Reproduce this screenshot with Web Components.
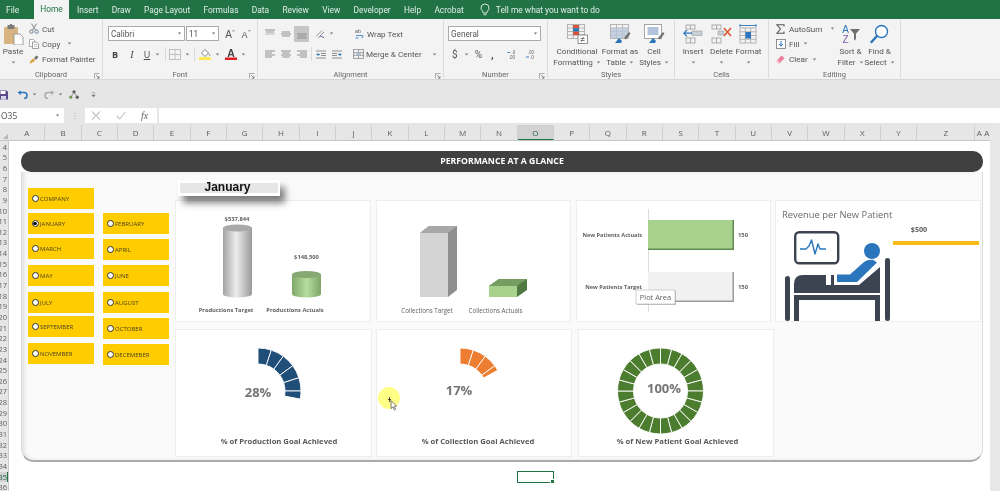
<!DOCTYPE html>
<html>
<head>
<meta charset="utf-8">
<title>Performance at a glance</title>
<style>
  html, body { margin: 0; height: 491px; overflow: hidden; background: #fff; }
  body { font-family: "Open Sans", "Liberation Sans", sans-serif; font-size: 9px; color: #555; }
  excel-window { width: 1000px; height: 491px; }
</style>
</head>
<body>
<excel-window>
  <ribbon-tabs></ribbon-tabs>
  <ribbon-bar></ribbon-bar>
  <quick-access></quick-access>
  <formula-bar></formula-bar>
  <sheet-view>
    <perf-dashboard heading="PERFORMANCE AT A GLANCE">
      <tile-panel slot="tiles"></tile-panel>
      <month-title slot="month">January</month-title>
      <card-row slot="top">
        <dash-card style="width:194px"><production-chart></production-chart></dash-card>
        <dash-card style="width:193px;margin-left:7px"><collection-chart></collection-chart></dash-card>
        <dash-card style="width:193px;margin-left:7px"><patients-chart></patients-chart></dash-card>
        <dash-card style="width:204px;margin-left:6px"><revenue-chart></revenue-chart></dash-card>
      </card-row>
      <card-row slot="bottom">
        <dash-card style="width:195px"><goal-gauge pct="28" step="18" color="#1f4e79" cx="82" tx="82" ty="62" lx="103">% of Production Goal Achieved</goal-gauge></dash-card>
        <dash-card style="width:194px;margin-left:6px"><goal-gauge pct="17" step="18" color="#ed7d31" cx="83" tx="82" ty="60" lx="101">% of Collection Goal Achieved</goal-gauge></dash-card>
        <dash-card style="width:194px;margin-left:8px"><goal-gauge pct="100" step="15" color="#4c7c2e" cx="81.5" tx="85" ty="58" lx="98.5">% of New Patient Goal Achieved</goal-gauge></dash-card>
      </card-row>
    </perf-dashboard>
  </sheet-view>
</excel-window>

<script>
/* small helper: static element, markup and styles in an open shadow root */
function simple(name, css, html) {
  customElements.define(name, class extends HTMLElement {
    constructor() {
      super();
      this.attachShadow({mode: 'open'}).innerHTML = '<style>' + css + '</style>' + html;
    }
  });
}

const BLUE = '#2a75bb';
function lines(rows) {
  return rows.map(r => `<path d="M${r[0]} ${r[1]}H${r[2]}" stroke="${r[3] || '#8f8f8f'}" stroke-width="1"/>`).join('');
}
function grid(x, y, w, h, nx, ny, c) {
  let s = `<rect x="${x}" y="${y}" width="${w}" height="${h}" fill="none" stroke="${c}" stroke-width=".8"/>`;
  for (let i = 1; i < nx; i++) s += `<path d="M${x + w * i / nx} ${y}v${h}" stroke="${c}" stroke-width=".8"/>`;
  for (let i = 1; i < ny; i++) s += `<path d="M${x} ${y + h * i / ny}h${w}" stroke="${c}" stroke-width=".8"/>`;
  return s;
}

/* all icons are drawn for a viewBox equal to their size */
const ICONS = {
  caret: [5, 3, '<path d="M.8 .5h3.4L2.5 2.5z" fill="#777"/>'],
  launcher: [6, 6, '<path d="M.5 .5h5M.5 .5v5" stroke="#999" fill="none" stroke-width=".8"/><path d="M2 2l3 3M5 3v2.3H2.8" stroke="#777" fill="none" stroke-width=".8"/>'],
  paste: [21, 21, '<rect x="1" y="3" width="14" height="17" rx="1" fill="#d8b483"/><rect x="4.5" y="1" width="7" height="4" fill="#7b7b7b"/><path d="M7 0h2v2H7z" fill="#7b7b7b"/><path d="M11 10h6l3 3v8h-9z" fill="#fff" stroke="#8a8a8a" stroke-width=".8"/>'],
  cut: [10, 11, '<circle cx="2.4" cy="8.6" r="1.7" fill="none" stroke="#6a7f95"/><circle cx="7.6" cy="8.6" r="1.7" fill="none" stroke="#6a7f95"/><path d="M3.3 7.2L7.6.6M6.7 7.2L2.4.6" stroke="#7d7d7d" stroke-width=".9"/>'],
  copy: [10, 10, '<path d="M.5 .5h4l1 1v6h-5z" fill="#fff" stroke="#9a9a9a" stroke-width=".8"/><path d="M3.5 3h4l2 2v4.5h-6z" fill="#fff" stroke="#8a8a8a" stroke-width=".8"/><path d="M5 5.5h3M5 7.3h3" stroke="#aaa" stroke-width=".7"/>'],
  painter: [10, 9, '<path d="M.5 8.5c1-3 2-4 4-5l1.6 1.6c-1 2-2.5 3-5.6 3.4z" fill="#d9a441"/><path d="M5 2.8L7.8.5l1.6 1.6L6.8 5z" fill="#6e6e6e"/>'],
  borders: [12, 11, grid(.5, .5, 11, 10, 2, 2, '#b5b5b5')],
  fill: [12, 12, '<path d="M2.5 5L6 1.5 9.5 5 6 8.5z" fill="#fff" stroke="#777" stroke-width=".9"/><path d="M9.7 5.5c.8 1 1.2 1.7 1.2 2.3" stroke="#777" stroke-width=".9" fill="none"/><rect x="0" y="9.2" width="12" height="2.8" fill="#ffe94a"/>'],
  fontcolor: [12, 12, '<text x="6" y="8.5" text-anchor="middle" font-family="Liberation Sans,sans-serif" font-size="10.5" font-weight="700" fill="#444">A</text><rect x="0" y="9.5" width="12" height="2.5" fill="#e02020"/>'],
  growa: [11, 10, '<text x="4.5" y="9" text-anchor="middle" font-family="Liberation Sans,sans-serif" font-size="10" fill="#555">A</text><path d="M8.5 2.5l1-1.5 1 1.5" fill="none" stroke="#777" stroke-width=".7"/>'],
  shrinka: [11, 10, '<text x="4.5" y="9" text-anchor="middle" font-family="Liberation Sans,sans-serif" font-size="9" fill="#555">A</text><path d="M8.5 1l1 1.5 1-1.5" fill="none" stroke="#777" stroke-width=".7"/>'],
  atop: [10, 10, lines([[0, 1, 10], [1, 3, 9], [0, 5, 10, '#bdbdbd']])],
  amid: [10, 10, lines([[1, 3, 9], [0, 5, 10], [1, 7, 9]])],
  abot: [10, 10, lines([[0, 5, 10], [1, 7, 9], [0, 9, 10]])],
  orient: [11, 10, '<path d="M1 7.5L7 1.5M3 9l6-6" stroke="#8a8a8a" stroke-width=".9"/><path d="M5 7l4 1.5" stroke="#7b5ea7" stroke-width="1"/>'],
  wrap: [9, 11, '<text x="0" y="5" font-family="Liberation Sans,sans-serif" font-size="5.5" fill="#666">ab</text><path d="M1 7.5h6q1.5 0 1 1.5L6.5 10M.5 10h3" fill="none" stroke="#2a75bb" stroke-width=".8"/>'],
  left: [10, 8, lines([[0, 1, 10], [0, 3, 7], [0, 5, 10], [0, 7, 7]])],
  center: [10, 8, lines([[0, 1, 10], [1.5, 3, 8.5], [0, 5, 10], [1.5, 7, 8.5]])],
  right: [10, 8, lines([[0, 1, 10], [3, 3, 10], [0, 5, 10], [3, 7, 10]])],
  indl: [10, 9, lines([[0, 1, 10], [5, 3.5, 10], [5, 5.5, 10], [0, 8, 10]]) + '<path d="M4 4.5H1M2.5 3L1 4.5 2.5 6" fill="none" stroke="#2a75bb" stroke-width=".9"/>'],
  indr: [10, 9, lines([[0, 1, 10], [0, 3.5, 5], [0, 5.5, 5], [0, 8, 10]]) + '<path d="M6 4.5h3M7.5 3L9 4.5 7.5 6" fill="none" stroke="#2a75bb" stroke-width=".9"/>'],
  merge: [11, 10, grid(.5, .5, 10, 9, 2, 3, '#8f8f8f') + '<rect x="1" y="3.5" width="9" height="3" fill="#f3f3f3" stroke="#8f8f8f" stroke-width=".5"/><path d="M3 5h5" stroke="#2a75bb" stroke-width=".8"/>'],
  incdec: [10, 9, '<text x="6.5" y="4" text-anchor="middle" font-family="Liberation Sans,sans-serif" font-size="4.5" fill="#666">.0</text><text x="5" y="8.7" text-anchor="middle" font-family="Liberation Sans,sans-serif" font-size="4.5" fill="#666">.00</text><path d="M3 2.5H.5" stroke="#2a75bb" stroke-width=".9"/>'],
  decdec: [10, 9, '<text x="6" y="4" text-anchor="middle" font-family="Liberation Sans,sans-serif" font-size="4.5" fill="#666">.00</text><text x="7" y="8.7" text-anchor="middle" font-family="Liberation Sans,sans-serif" font-size="4.5" fill="#666">.0</text><path d="M1 7h3" stroke="#2a75bb" stroke-width=".9"/>'],
  cond: [21, 20, grid(.5, .5, 17, 14, 3, 4, '#a5a5a5') + '<rect x="6" y="1" width="6" height="3.2" fill="#d4533a"/><rect x="6" y="4.2" width="6" height="3.5" fill="#2a75bb"/><rect x="6" y="7.7" width="6" height="3.5" fill="#d4533a"/><rect x="11" y="11" width="9.5" height="8.5" fill="#fff" stroke="#777" stroke-width=".8"/><text x="15.7" y="18" text-anchor="middle" font-family="Liberation Sans,sans-serif" font-size="8" fill="#555">≠</text>'],
  table: [21, 20, grid(.5, .5, 18, 14, 3, 4, '#a8a8a8') + '<rect x="1" y="4" width="17" height="10" fill="#b9c8dc" opacity=".8"/><path d="M5 19l4-5 3 3-1 2z" fill="#2a75bb"/><path d="M14 14l5-6 1.5 1.5-4.5 6z" fill="#6e6e6e"/>'],
  cell: [21, 20, '<rect x=".5" y=".5" width="17" height="14" fill="#fff" stroke="#a5a5a5"/><rect x="3.5" y="3" width="11" height="8" fill="#b2c3db"/><path d="M5 19l4-5 3 3-1 2z" fill="#2a75bb"/><path d="M14 14l5-6 1.5 1.5-4.5 6z" fill="#6e6e6e"/>'],
  insert: [20, 20, grid(3, 1, 9, 4, 2, 1, '#999') + grid(3, 14, 9, 5, 2, 1, '#999') + '<rect x="9" y="7" width="10" height="4.5" fill="#c8d0da" stroke="#999" stroke-width=".6"/><path d="M9 9.2H1M4 6L.8 9.2 4 12.4" fill="none" stroke="#2a75bb" stroke-width="1.2"/>'],
  delete: [21, 20, grid(1, 1, 9, 4, 2, 1, '#999') + grid(1, 14, 9, 5, 2, 1, '#999') + '<rect x="7" y="7" width="6" height="4" fill="#c8d0da" stroke="#999" stroke-width=".6"/><path d="M13 4l7 8M20 4l-7 8" stroke="#d9542b" stroke-width="1.5"/>'],
  format: [19, 20, grid(1, 4, 16, 15, 3, 4, '#a5a5a5') + '<rect x="6.5" y="8" width="5.5" height="6.5" fill="#2a75bb"/><path d="M1 1.5h16M1 0v3M17 0v3" stroke="#2a75bb" stroke-width=".9"/>'],
  sigma: [9, 10, '<path d="M8 2.5V.8H1l3.5 4.2L1 9.2h7V7.5" fill="none" stroke="#555" stroke-width="1.1"/>'],
  filldown: [10, 10, '<rect x=".5" y=".5" width="9" height="9" fill="#fff" stroke="#777" stroke-width=".8"/><path d="M5 2v5M3 5l2 2.2L7 5" fill="none" stroke="#2a75bb" stroke-width="1"/>'],
  eraser: [9, 9, '<path d="M.5 6l5-5.5 3 2.5-5 5.5z" fill="#ec7d9c"/><path d="M.5 6l2.2 2.2 1.5-1.5-2.3-2.2z" fill="#f3b4c4"/>'],
  sort: [20, 20, '<text x="4.5" y="8.5" text-anchor="middle" font-family="Liberation Sans,sans-serif" font-size="10" fill="#2a75bb">A</text><text x="4.5" y="18.5" text-anchor="middle" font-family="Liberation Sans,sans-serif" font-size="10" fill="#7b5ea7">Z</text><path d="M9 5h10l-4 4.8V15l-2 1.5V9.8z" fill="#707070"/>'],
  find: [19, 20, '<circle cx="11.5" cy="7.5" r="6" fill="#fff" stroke="#2a75bb" stroke-width="1.4"/><path d="M7 12l-5.5 6" stroke="#2a75bb" stroke-width="2.4" stroke-linecap="round"/>'],
  bulb: [10, 13, '<path d="M3 8.5C1.5 7.5 1 6.3 1 5a4 4 0 0 1 8 0c0 1.3-.5 2.5-2 3.5V10H3z" fill="none" stroke="#e6f0ea" stroke-width=".9"/><path d="M3.5 11.7h3" stroke="#e6f0ea" stroke-width=".9"/>'],
  save: [9, 10, '<path d="M0 .5h7.5L9 2v7.5H0z" fill="#5b4a8a"/><rect x="1.5" y="1" width="5" height="3" fill="#fff"/><rect x="2" y="6" width="5" height="3.5" fill="#d5d5e5"/>'],
  undo: [11, 9, '<path d="M2 4h5a3 3 0 0 1 0 6" transform="translate(0,-1.4)" fill="none" stroke="#2a75bb" stroke-width="1.5"/><path d="M3.8 .4L.6 2.6l3.2 2.4z" fill="#2a75bb"/>'],
  redo: [11, 9, '<path d="M9 4H4a3 3 0 0 0 0 6" transform="translate(0,-1.4)" fill="none" stroke="#aaa" stroke-width="1.5"/><path d="M7.2 .4l3.2 2.2-3.2 2.4z" fill="#aaa"/>'],
  tree: [10, 9, '<circle cx="5" cy="1.8" r="1.6" fill="#555"/><circle cx="1.8" cy="7.2" r="1.6" fill="#7a9a55"/><circle cx="8.2" cy="7.2" r="1.6" fill="#555"/><path d="M5 2L2 7M5 2l3 5" stroke="#777" stroke-width=".7"/>'],
  more: [5, 6, '<path d="M.8 .8h3.4M.8 3h3.4L2.5 5z" stroke="#777" stroke-width=".6" fill="#777"/>'],
  cross: [10, 9, '<path d="M1 .5l8 8M9 .5l-8 8" stroke="#c4c4c4" stroke-width="1.1"/>'],
  check: [10, 9, '<path d="M.8 5l3 3L9.2 1" fill="none" stroke="#c4c4c4" stroke-width="1.1"/>']
};

customElements.define('x-icon', class extends HTMLElement {
  connectedCallback() {
    const i = ICONS[this.getAttribute('name')];
    this.attachShadow({mode: 'open'}).innerHTML =
      `<style>:host{display:inline-block;line-height:0;flex:none}</style><svg width="${i[0]}" height="${i[1]}" viewBox="0 0 ${i[0]} ${i[1]}">${i[2]}</svg>`;
  }
});

simple('excel-window', ':host{display:flex;flex-direction:column;overflow:hidden;filter:blur(.3px)}', '<slot></slot>');

/* ---------- title tabs ---------- */
simple('ribbon-tabs', `
  :host{display:flex;flex:none;height:19px;background:#217346;color:#dfeee6;font:8.4px Roboto,"Liberation Sans",sans-serif;align-items:center}
  span{flex:none;margin-left:13.3px}
  .home{background:#f3f3f3;color:#217346;height:19px;line-height:19px;width:35px;text-align:center;margin-left:13px}
  .first{margin-left:6px;width:15px}
  .tell{margin-left:6px}
  x-icon{margin-left:16px}`,
  `<span class="first">File</span><span class="home">Home</span><span style="margin-left:8px">Insert</span><span>Draw</span><span>Page Layout</span><span>Formulas</span><span>Data</span><span>Review</span><span>View</span><span>Developer</span><span>Help</span><span>Acrobat</span><x-icon name="bulb"></x-icon><span class="tell">Tell me what you want to do</span>`);

/* ---------- ribbon parts ---------- */
customElements.define('r-group', class extends HTMLElement {
  connectedCallback() {
    const launcher = this.hasAttribute('launcher') ? '<x-icon name="launcher"></x-icon>' : '';
    this.attachShadow({mode: 'open'}).innerHTML = `<style>
      :host{display:flex;flex-direction:column;flex:none;box-sizing:border-box;height:58px;margin-top:1px;border-right:1px solid #dcdcdc;position:relative}
      .body{flex:1;display:flex;min-height:0}
      .label{flex:none;height:10px;line-height:9px;text-align:center;font-size:7.5px;color:#666;margin-bottom:-2px}
      x-icon{position:absolute;right:2px;bottom:-1px}
    </style><div class="body"><slot></slot></div><div class="label">${this.getAttribute('label')}</div>${launcher}`;
  }
});

customElements.define('s-btn', class extends HTMLElement {
  connectedCallback() {
    const caret = this.getAttribute('caret');
    this.attachShadow({mode: 'open'}).innerHTML = `<style>
      :host{display:flex;align-items:center;height:15.2px;font-size:8.1px;color:#555;white-space:nowrap}
      .ic{width:${this.getAttribute('iw') || 13}px;flex:none;display:flex}
      .cr{display:flex;margin-left:${caret}px}
    </style><span class="ic"><x-icon name="${this.getAttribute('icon')}"></x-icon></span><slot></slot>${caret ? '<span class="cr"><x-icon name="caret"></x-icon></span>' : ''}`;
  }
});

customElements.define('big-btn', class extends HTMLElement {
  connectedCallback() {
    const l2 = this.getAttribute('l2');
    this.attachShadow({mode: 'open'}).innerHTML = `<style>
      :host{display:flex;flex-direction:column;align-items:center;flex:none;font-size:8.1px;color:#555;line-height:11px;white-space:nowrap;padding-top:4px}
      .ic{height:21px;display:flex;align-items:flex-start;margin-bottom:1px}
      .l2{display:flex;align-items:center;gap:3px;height:11px}
    </style><div class="ic"><x-icon name="${this.getAttribute('icon')}"></x-icon></div><div>${this.getAttribute('l1')}</div><div class="l2">${l2 || ''}<x-icon name="caret"></x-icon></div>`;
  }
});

simple('ribbon-bar', `
  :host{display:flex;flex:none;height:61px;box-sizing:border-box;background:#f3f3f3;border-bottom:1px solid #d6d6d6;font:8.1px Roboto,"Liberation Sans",sans-serif;color:#555}
  .col{display:flex;flex-direction:column;padding-top:1.2px}
  .two{display:flex;flex-direction:column;padding-top:6px;gap:5px;width:100%;box-sizing:border-box}
  .row{display:flex;align-items:center;height:15.5px;flex:none}
  .box{box-sizing:border-box;height:15px;background:#fff;border:1px solid #ababab;display:flex;align-items:center;justify-content:space-between;padding:0 2px 0 2px;flex:none;font-size:8.2px;color:#555}
  .on{background:#c6c6c6;width:15px;height:16px;display:flex;align-items:center;justify-content:center;flex:none}
  .sep{width:1px;height:14px;background:#d9d9d9;flex:none}
  b,i,u{font-family:"Liberation Serif",serif;font-size:10px;width:10px;text-align:center;flex:none;color:#444}
  b,u{font-family:"Open Sans",sans-serif;font-size:9px}
  .t{flex:none;white-space:nowrap}
  .big{display:flex;width:100%}`,
  `
  <r-group label="Clipboard" launcher style="width:103px">
    <big-btn icon="paste" l1="Paste" style="margin-left:3px;width:20px"></big-btn>
    <div class="col" style="margin-left:6px">
      <s-btn icon="cut">Cut</s-btn>
      <s-btn icon="copy" caret="7">Copy</s-btn>
      <s-btn icon="painter">Format Painter</s-btn>
    </div>
  </r-group>
  <r-group label="Font" launcher style="width:155px">
    <div class="two" style="padding-left:5px">
      <div class="row">
        <div class="box" style="width:77px">Calibri<x-icon name="caret"></x-icon></div>
        <div class="box" style="width:33px;margin-left:1px">11<x-icon name="caret"></x-icon></div>
        <x-icon name="growa" style="margin-left:5px"></x-icon>
        <x-icon name="shrinka" style="margin-left:5px"></x-icon>
      </div>
      <div class="row">
        <b style="margin-left:2px">B</b><i style="margin-left:7px">I</i><u style="margin-left:5px">U</u>
        <x-icon name="caret" style="margin-left:3px"></x-icon>
        <span class="sep" style="margin-left:5px"></span>
        <x-icon name="borders" style="margin-left:3px"></x-icon>
        <x-icon name="caret" style="margin-left:4px"></x-icon>
        <span class="sep" style="margin-left:4px"></span>
        <x-icon name="fill" style="margin-left:4px"></x-icon>
        <x-icon name="caret" style="margin-left:4px"></x-icon>
        <x-icon name="fontcolor" style="margin-left:5px"></x-icon>
        <x-icon name="caret" style="margin-left:4px"></x-icon>
      </div>
    </div>
  </r-group>
  <r-group label="Alignment" launcher style="width:186px">
    <div class="two" style="padding-left:7px">
      <div class="row">
        <x-icon name="atop"></x-icon>
        <x-icon name="amid" style="margin-left:6px"></x-icon>
        <span class="on" style="margin-left:3px"><x-icon name="abot"></x-icon></span>
        <x-icon name="orient" style="margin-left:6px"></x-icon>
        <x-icon name="caret" style="margin-left:3px"></x-icon>
        <x-icon name="wrap" style="margin-left:21px"></x-icon>
        <span class="t" style="margin-left:3px">Wrap Text</span>
      </div>
      <div class="row">
        <x-icon name="left"></x-icon>
        <x-icon name="center" style="margin-left:6px"></x-icon>
        <x-icon name="right" style="margin-left:6px"></x-icon>
        <span class="sep" style="margin-left:4px"></span>
        <x-icon name="indl" style="margin-left:4px"></x-icon>
        <x-icon name="indr" style="margin-left:6px"></x-icon>
        <x-icon name="merge" style="margin-left:11px"></x-icon>
        <span class="t" style="margin-left:2px">Merge &amp; Center</span>
        <x-icon name="caret" style="margin-left:10px"></x-icon>
      </div>
    </div>
  </r-group>
  <r-group label="Number" launcher style="width:104px">
    <div class="two" style="padding-left:4px">
      <div class="row"><div class="box" style="width:93px">General<x-icon name="caret"></x-icon></div></div>
      <div class="row">
        <span class="t" style="margin-left:4px;font-size:10px">$</span>
        <x-icon name="caret" style="margin-left:6px"></x-icon>
        <span class="t" style="margin-left:6px;font-size:10px">%</span>
        <span class="t" style="margin-left:9px;font-size:11px;font-weight:700">,</span>
        <x-icon name="incdec" style="margin-left:13px"></x-icon>
        <x-icon name="decdec" style="margin-left:8px"></x-icon>
      </div>
    </div>
  </r-group>
  <r-group label="Styles" style="width:127px">
    <div class="big">
      <big-btn icon="cond" l1="Conditional" l2="Formatting" style="margin-left:5px;width:48px"></big-btn>
      <big-btn icon="table" l1="Format as" l2="Table" style="margin-left:1px;width:36px"></big-btn>
      <big-btn icon="cell" l1="Cell" l2="Styles" style="margin-left:2px;width:28px"></big-btn>
    </div>
  </r-group>
  <r-group label="Cells" style="width:94px">
    <div class="big">
      <big-btn icon="insert" l1="Insert" style="margin-left:8px;width:20px"></big-btn>
      <big-btn icon="delete" l1="Delete" style="margin-left:7px;width:23px"></big-btn>
      <big-btn icon="format" l1="Format" style="margin-left:3px;width:25px"></big-btn>
    </div>
  </r-group>
  <r-group label="Editing" style="width:132px">
    <div class="col" style="margin-left:7px;width:67px">
      <s-btn icon="sigma">AutoSum<x-icon name="caret" style="margin-left:8px"></x-icon></s-btn>
      <s-btn icon="filldown" caret="4">Fill</s-btn>
      <s-btn icon="eraser" caret="4">Clear</s-btn>
    </div>
    <big-btn icon="sort" l1="Sort &amp;" l2="Filter" style="width:25px;margin-left:-5px"></big-btn>
    <big-btn icon="find" l1="Find &amp;" l2="Select" style="width:29px;margin-left:2px"></big-btn>
  </r-group>`);

/* ---------- quick access + formula bar ---------- */
simple('quick-access', `
  :host{display:flex;flex:none;height:28px;background:#e6e6e6;align-items:center;padding-top:1px;box-sizing:border-box}
  x-icon{flex:none}`,
  `<x-icon name="save" style="margin-left:-1px"></x-icon><x-icon name="undo" style="margin-left:9px"></x-icon><x-icon name="caret" style="margin-left:4px"></x-icon><x-icon name="redo" style="margin-left:7px"></x-icon><x-icon name="caret" style="margin-left:3px"></x-icon><x-icon name="tree" style="margin-left:6px"></x-icon><x-icon name="more" style="margin-left:12px"></x-icon>`);

simple('formula-bar', `
  :host{display:flex;flex:none;height:17px;background:#e6e6e6;box-sizing:border-box;padding-bottom:2px;font-size:8.5px;color:#555}
  .name{width:64px;background:#fff;display:flex;align-items:center;justify-content:space-between;padding:0 4px 0 1px;box-sizing:border-box}
  .grip{width:21px;text-align:center;color:#aaa;line-height:13px;font-size:8px}
  .btns{width:72px;background:#fff;display:flex;align-items:center;box-sizing:border-box}
  .fx{font-family:"Liberation Serif",serif;font-style:italic;font-size:10px;color:#666;margin-left:15px}
  .input{flex:1;background:#fff;margin-left:2px}`,
  `<div class="name">O35<x-icon name="caret"></x-icon></div><div class="grip">⋮</div><div class="btns"><x-icon name="cross" style="margin-left:6px"></x-icon><x-icon name="check" style="margin-left:15px"></x-icon><span class="fx">fx</span></div><div class="input"></div>`);

/* ---------- sheet ---------- */
customElements.define('sheet-view', class extends HTMLElement {
  constructor() {
    super();
    const letters = 'ABCDEFGHIJKLMNOPQRSTUVWXY'.split('');
    const cols = letters.map(c => `<div class="c${c === 'O' ? ' sel' : ''}" style="width:36.33px">${c}</div>`).join('')
      + '<div class="c" style="width:58px">Z</div><div class="c n" style="width:8px">A</div><div class="c n" style="width:7px">A</div>';
    let rows = '';
    for (let r = 4; r <= 36; r++) rows += `<div class="r${r === 35 ? ' sel' : ''}">${r}</div>`;
    this.attachShadow({mode: 'open'}).innerHTML = `<style>
      :host{display:grid;flex:1;min-height:0;grid-template-columns:9px 981px 10px;grid-template-rows:16px 1fr;background:#fff;overflow:hidden}
      .corner{background:#e6e6e6;display:flex;align-items:flex-end;justify-content:flex-end;border-bottom:1px solid #c6c6c6;box-sizing:border-box}
      .corner i{border-style:solid;border-width:0 0 5px 5px;border-color:transparent transparent #b5b5b5 transparent;margin:0 1px 1px 0}
      .cols{display:flex;background:#e6e6e6;border-bottom:1px solid #c6c6c6;box-sizing:border-box;overflow:hidden}
      .c{flex:none;box-sizing:border-box;border-right:1px solid #cfcfcf;text-align:center;font-size:8px;line-height:15px;color:#5c5c5c}
      .c.sel{background:#d2d2d2;color:#20603c;border-bottom:1px solid #217346}
      .c.n{border-right:0}
      .rows{background:#e6e6e6;overflow:hidden;border-right:1px solid #c9c9c9;box-sizing:border-box;padding-top:.7px}
      .r{height:10.65px;line-height:10.65px;font-size:7.5px;text-align:right;padding-right:1px;color:#5c5c5c;overflow:hidden;white-space:nowrap;direction:rtl}
      .r.sel{background:#d2d2d2;color:#20603c;box-shadow:inset -1px 0 0 #217346}
      .main{position:relative;padding:10px 7px 0 12px;box-sizing:border-box;min-width:0}
      .scroll{grid-column:3;grid-row:1 / 3;background:#e8e8e8}
      .cell{position:absolute;left:508px;top:330px;width:37px;height:12px;box-sizing:border-box;border:1px solid #217346}
      .cell i{position:absolute;right:-2px;bottom:-2px;width:3px;height:3px;background:#217346;border:.5px solid #fff}
    </style>
    <div class="corner"><i></i></div><div class="cols">${cols}</div><div class="scroll"></div>
    <div class="rows">${rows}</div>
    <div class="main"><slot></slot><div class="cell"><i></i></div></div>`;
  }
});

/* ---------- dashboard ---------- */
customElements.define('perf-dashboard', class extends HTMLElement {
  connectedCallback() {
    this.attachShadow({mode: 'open'}).innerHTML = `<style>
      :host{display:block;width:962px;position:relative}
      .head{height:21px;background:#404040;border-radius:10px;color:#fff;font:700 8.7px/21px "Open Sans","Liberation Sans",sans-serif;text-align:center;position:relative;z-index:1}
      .body{height:290px;box-sizing:border-box;background:#fafafa;border:1px solid #dcdcdc;border-top:0;border-bottom:2px solid #ababab;border-radius:0 0 13px 13px;box-shadow:inset 3px 0 4px -1px #dedede;display:flex}
      .left{flex:none;width:154px;box-sizing:border-box;padding-left:6px}
      .right{flex:1;min-width:0}
      .gap{height:9px}
      .spot{position:absolute;left:357px;top:236px;width:22px;height:22px;border-radius:50%;background:#ffff88;z-index:2}
      svg{position:absolute;left:367px;top:246px;z-index:3}
    </style>
    <div class="head">${this.getAttribute('heading')}</div>
    <div class="body">
      <div class="left"><slot name="tiles"></slot></div>
      <div class="right"><slot name="month"></slot><slot name="top"></slot><div class="gap"></div><slot name="bottom"></slot></div>
    </div>
    <div class="spot"></div>
    <svg width="10" height="14" viewBox="0 0 10 14"><path d="M1.5 0v5M0 2.5h3" stroke="#222" stroke-width=".8"/><path d="M3 3.5l.1 8 1.8-1.6 1.4 3 1.3-.6-1.4-3 2.4-.2z" fill="#fff" stroke="#444" stroke-width=".7"/></svg>`;
  }
});

customElements.define('radio-tile', class extends HTMLElement {
  connectedCallback() {
    const on = this.hasAttribute('checked');
    this.attachShadow({mode: 'open'}).innerHTML = `<style>
      :host{display:flex;width:66px;height:21px;background:#ffcc00;align-items:center;box-sizing:border-box;padding-left:3.5px;font-size:6px;color:#4a4420}
      i{flex:none;width:7px;height:7px;box-sizing:border-box;border-radius:50%;background:#fff;border:.7px solid #333;display:flex;align-items:center;justify-content:center;margin-right:1.5px}
      i::after{content:"";width:3.4px;height:3.4px;border-radius:50%;background:${on ? '#111' : 'transparent'}}
    </style><i></i><span>${this.getAttribute('label')}</span>`;
  }
});

simple('tile-panel', `
  :host{display:flex;gap:9px}
  .col{display:flex;flex-direction:column}`,
  `<div class="col" style="padding-top:16px">
     <radio-tile label="COMPANY"></radio-tile>
     <radio-tile label="JANUARY" checked style="margin-top:4px"></radio-tile>
     <radio-tile label="MARCH" style="margin-top:4px"></radio-tile>
     <radio-tile label="MAY" style="margin-top:6px"></radio-tile>
     <radio-tile label="JULY" style="margin-top:6px"></radio-tile>
     <radio-tile label="SEPTEMBER" style="margin-top:3px"></radio-tile>
     <radio-tile label="NOVEMBER" style="margin-top:6px"></radio-tile>
   </div>
   <div class="col" style="padding-top:41px">
     <radio-tile label="FEBRUARY"></radio-tile>
     <radio-tile label="APRIL" style="margin-top:5px"></radio-tile>
     <radio-tile label="JUNE" style="margin-top:5px"></radio-tile>
     <radio-tile label="AUGUST" style="margin-top:6px"></radio-tile>
     <radio-tile label="OCTOBER" style="margin-top:5px"></radio-tile>
     <radio-tile label="DECEMEBER" style="margin-top:5px"></radio-tile>
   </div>`);

simple('month-title', `
  :host{display:block;position:relative;z-index:1;box-sizing:border-box;width:102px;height:16px;margin:8px 0 5px 2px;padding:3px 2px;background:#fff;box-shadow:5px 7px 7px rgba(0,0,0,.5)}
  div{height:10px;background:#e6e6e6;text-align:center;font:700 12px/8px "Liberation Sans",sans-serif;color:#111;padding-right:3px}`,
  '<div><slot></slot></div>');

simple('card-row', ':host{display:flex}', '<slot></slot>');
simple('dash-card', `
  :host{display:block;flex:none;background:#fff;box-shadow:0 0 0 1px #eee;overflow:hidden}`, '<slot></slot>');

const CHART_CSS = `
  :host{display:block}
  svg{display:block}
  text{font-family:"Open Sans","Liberation Sans",sans-serif;fill:#5f5f5f}
  .b{font-weight:700}`;

function cylinder(x, y, w, h, id) {
  const rx = w / 2, ry = 3.6;
  return `<path d="M${x} ${y}v${h}a${rx} ${ry} 0 0 0 ${w} 0v${-h}z" fill="url(#${id})"/><ellipse cx="${x + rx}" cy="${y}" rx="${rx}" ry="${ry}" fill="${id === 'g' ? '#a9a9a9' : '#86a974'}"/>`;
}

simple('production-chart', CHART_CSS, `
  <svg width="194" height="120" viewBox="176 201 194 120">
    <defs>
      <linearGradient id="g"><stop offset="0" stop-color="#a3a3a3"/><stop offset=".45" stop-color="#ededed"/><stop offset="1" stop-color="#9a9a9a"/></linearGradient>
      <linearGradient id="v"><stop offset="0" stop-color="#7fa869"/><stop offset=".5" stop-color="#b7dd9e"/><stop offset="1" stop-color="#7da568"/></linearGradient>
    </defs>
    ${cylinder(223, 228, 29, 66, 'g')}
    ${cylinder(292, 274.5, 29, 19.5, 'v')}
    <text class="b" x="237" y="221" text-anchor="middle" font-size="5.8">$537,844</text>
    <text class="b" x="306.5" y="258.5" text-anchor="middle" font-size="5.8">$148,500</text>
    <text class="b" x="226" y="312" text-anchor="middle" font-size="5.75">Productions Target</text>
    <text class="b" x="295" y="312" text-anchor="middle" font-size="5.75">Productions Actuals</text>
  </svg>`);

simple('collection-chart', CHART_CSS, `
  <svg width="193" height="120" viewBox="377 201 193 120">
    <path d="M420 233l9-7h28v64l-9 7v-64z" fill="#8f8f8f"/>
    <path d="M420 233l9-7h28l-9 7z" fill="#a8a8a8"/>
    <rect x="420" y="233" width="28" height="64" fill="#d4d4d4"/>
    <path d="M489 286l10-7h28v11l-10 7v-11z" fill="#4f7a41"/>
    <path d="M489 286l10-7h28l-10 7z" fill="#769c62"/>
    <rect x="489" y="286" width="28" height="11" fill="#a9d18e"/>
    <text x="427" y="313" text-anchor="middle" font-size="6.2">Collections Target</text>
    <text x="495.5" y="313" text-anchor="middle" font-size="6.2">Collections Actuals</text>
  </svg>`);

simple('patients-chart', CHART_CSS, `
  <svg width="193" height="120" viewBox="577 201 193 120">
    <path d="M648.5 209v103" stroke="#dcdcdc"/>
    <rect x="648" y="220" width="86" height="30" fill="#5f8a4d"/>
    <rect x="648" y="220" width="84.5" height="28.5" fill="#a9d18e"/>
    <rect x="648" y="272" width="86" height="30" fill="#9c9c9c"/>
    <rect x="648" y="272" width="84.5" height="28.5" fill="#f1f1f1"/>
    <text class="b" x="642" y="237" text-anchor="end" font-size="5.6">New Patients Actuals</text>
    <text class="b" x="642" y="289" text-anchor="end" font-size="5.6">New Patients Target</text>
    <text class="b" x="738" y="237" font-size="5.8">150</text>
    <text class="b" x="738" y="289" font-size="5.8">150</text>
    <rect x="637" y="291" width="39" height="14" fill="#8a8a8a" opacity=".55"/>
    <rect x="636" y="290" width="39" height="14" fill="#fff" stroke="#bcbcbc" stroke-width=".7"/>
    <text x="655.5" y="299.8" text-anchor="middle" font-size="7.4">Plot Area</text>
  </svg>`);

simple('revenue-chart', CHART_CSS, `
  <svg width="204" height="120" viewBox="777 201 204 120">
    <text x="783" y="218" font-size="9.4" style="fill:#6a6a6a">Revenue per New Patient</text>
    <text class="b" x="920" y="232" text-anchor="middle" font-size="7.2">$500</text>
    <rect x="894" y="241" width="86" height="4" fill="#fdbb1a"/>
    <rect x="796.2" y="232.2" width="43" height="31" rx="4" fill="#fff" stroke="#3b4450" stroke-width="2.4"/>
    <path d="M801 249h6l3-3 2.5-6 3.5 14 3-10 2 5h6" fill="none" stroke="${BLUE}" stroke-width="1.4" stroke-linejoin="round"/>
    <circle cx="873" cy="251" r="8" fill="#2a75bb"/>
    <path d="M838 274.5h13l14-12.5q4-3 9-2.2l4 2.6-20 19.6H838z" fill="#2a75bb"/>
    <path d="M795 293v-9q0-9 9-9h23v10h33l21-18v26z" fill="#3b4450"/>
    <rect x="832" y="275" width="3" height="10" fill="#3b4450"/>
    <rect x="786" y="276" width="5" height="45" rx="2.5" fill="#3b4450"/>
    <rect x="886" y="258" width="5" height="63" rx="2.5" fill="#3b4450"/>
    <path d="M795 321v-26h86v26h-5v-21h-76v21z" fill="#3b4450"/>
  </svg>`);

customElements.define('goal-gauge', class extends HTMLElement {
  connectedCallback() {
    const a = n => +this.getAttribute(n);
    const total = a('pct') * 3.6, step = a('step'), cx = a('cx'), cy = 61, R = 43, r = 27;
    const pt = (rad, deg) => {
      const t = deg * Math.PI / 180;
      return (cx + rad * Math.sin(t)).toFixed(2) + ' ' + (cy - rad * Math.cos(t)).toFixed(2);
    };
    let segs = '';
    for (let d = 0; d < total - .01; d += step) {
      const e = Math.min(d + step, total);
      segs += `<path d="M${pt(R, d)}A${R} ${R} 0 0 1 ${pt(R, e)}L${pt(r, e)}A${r} ${r} 0 0 0 ${pt(r, d)}z" fill="${this.getAttribute('color')}" stroke="#fff" stroke-width=".9"/>`;
    }
    this.attachShadow({mode: 'open'}).innerHTML = `<style>${CHART_CSS}</style>
      <svg width="195" height="126" viewBox="0 0 195 126">${segs}
        <text class="b" x="${a('tx')}" y="${a('ty') + 5}" text-anchor="middle" font-size="13" style="fill:#757575">${a('pct')}%</text>
        <text class="b" x="${a('lx')}" y="114" text-anchor="middle" font-size="7.65" style="fill:#595959">${this.textContent}</text>
      </svg>`;
  }
});
</script>
</body>
</html>
